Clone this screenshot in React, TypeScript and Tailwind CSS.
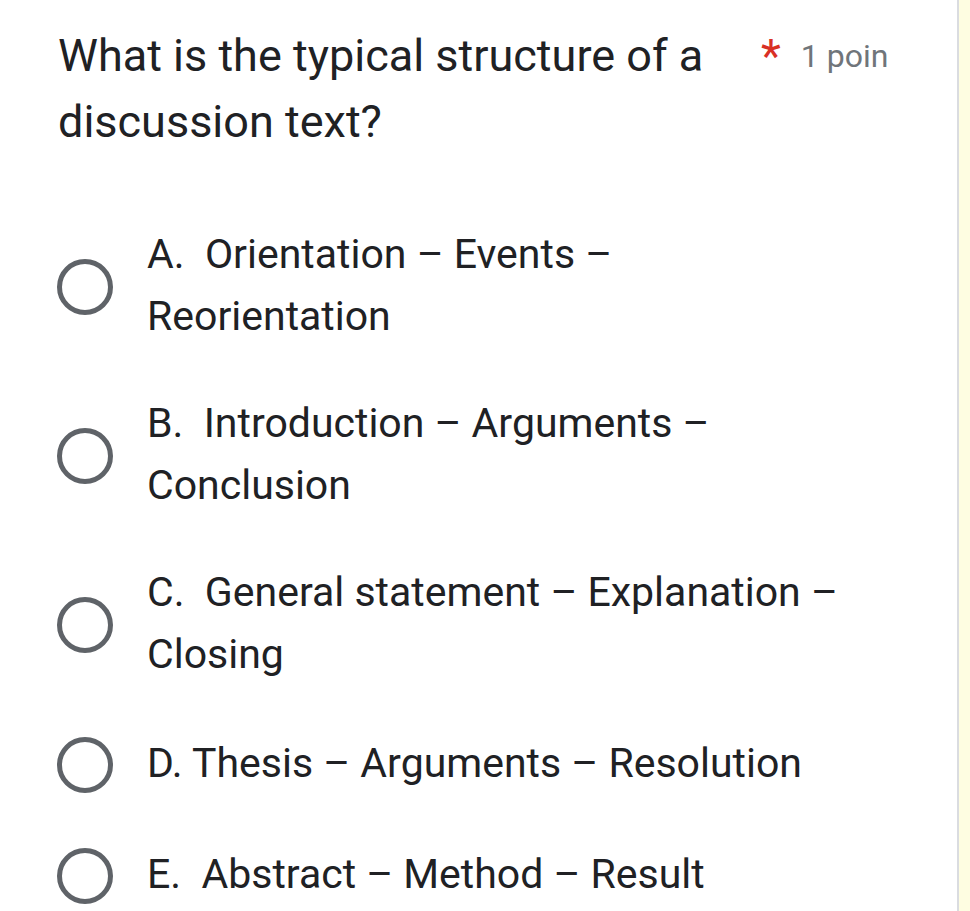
const options = [
  ["A.\u00a0 ", "Orientation – Events –", "Reorientation"],
  ["B.\u00a0 ", "Introduction – Arguments –", "Conclusion"],
  ["C.\u00a0 ", "General statement – Explanation –", "Closing"],
];

function Radio() {
  return (
    <div className="w-[56px] h-[56px] shrink-0 rounded-full border-[5px] border-[#5f6368] mt-[4px]" />
  );
}

export default function App() {
  return (
    <div
      className="flex h-[911px] w-[970px] overflow-hidden bg-white text-[#202124]"
      style={{ fontFamily: "Roboto, 'Noto Sans', sans-serif" }}
    >
      <div className="w-[959px] shrink-0 border-r-[2px] border-[#dadce0] pl-[57px] pt-[23px]">
        {/* question header */}
        <div className="flex items-start">
          <div className="w-[698px] text-[45px] leading-[66px] pl-[1px]">
            What is the typical structure of a discussion text?
          </div>
          <span className="ml-[6px] text-[46px] leading-[66px] text-[#d93025]">*</span>
          <span className="ml-[20px] mt-[13px] text-[32px] leading-[40px] text-[#70757a]">
            1 poin
          </span>
        </div>

        {/* options */}
        <div className="mt-[68px] flex flex-col gap-[45px]">
          {options.map(([letter, first, second]) => (
            <div key={letter} className="flex items-center gap-[34px]">
              <Radio />
              <div className="text-[41px] leading-[62px]">
                <div>
                  {letter}
                  {first}
                </div>
                <div>{second}</div>
              </div>
            </div>
          ))}
          <div className="flex min-h-[66px] items-center gap-[34px]">
            <Radio />
            <div className="text-[41px] leading-[62px]">D. Thesis – Arguments – Resolution</div>
          </div>
          <div className="flex min-h-[66px] items-center gap-[34px]">
            <Radio />
            <div className="text-[41px] leading-[62px]">E.&nbsp; Abstract – Method – Result</div>
          </div>
        </div>
      </div>
      <div className="flex-1 bg-[#fefde1]" />
    </div>
  );
}
